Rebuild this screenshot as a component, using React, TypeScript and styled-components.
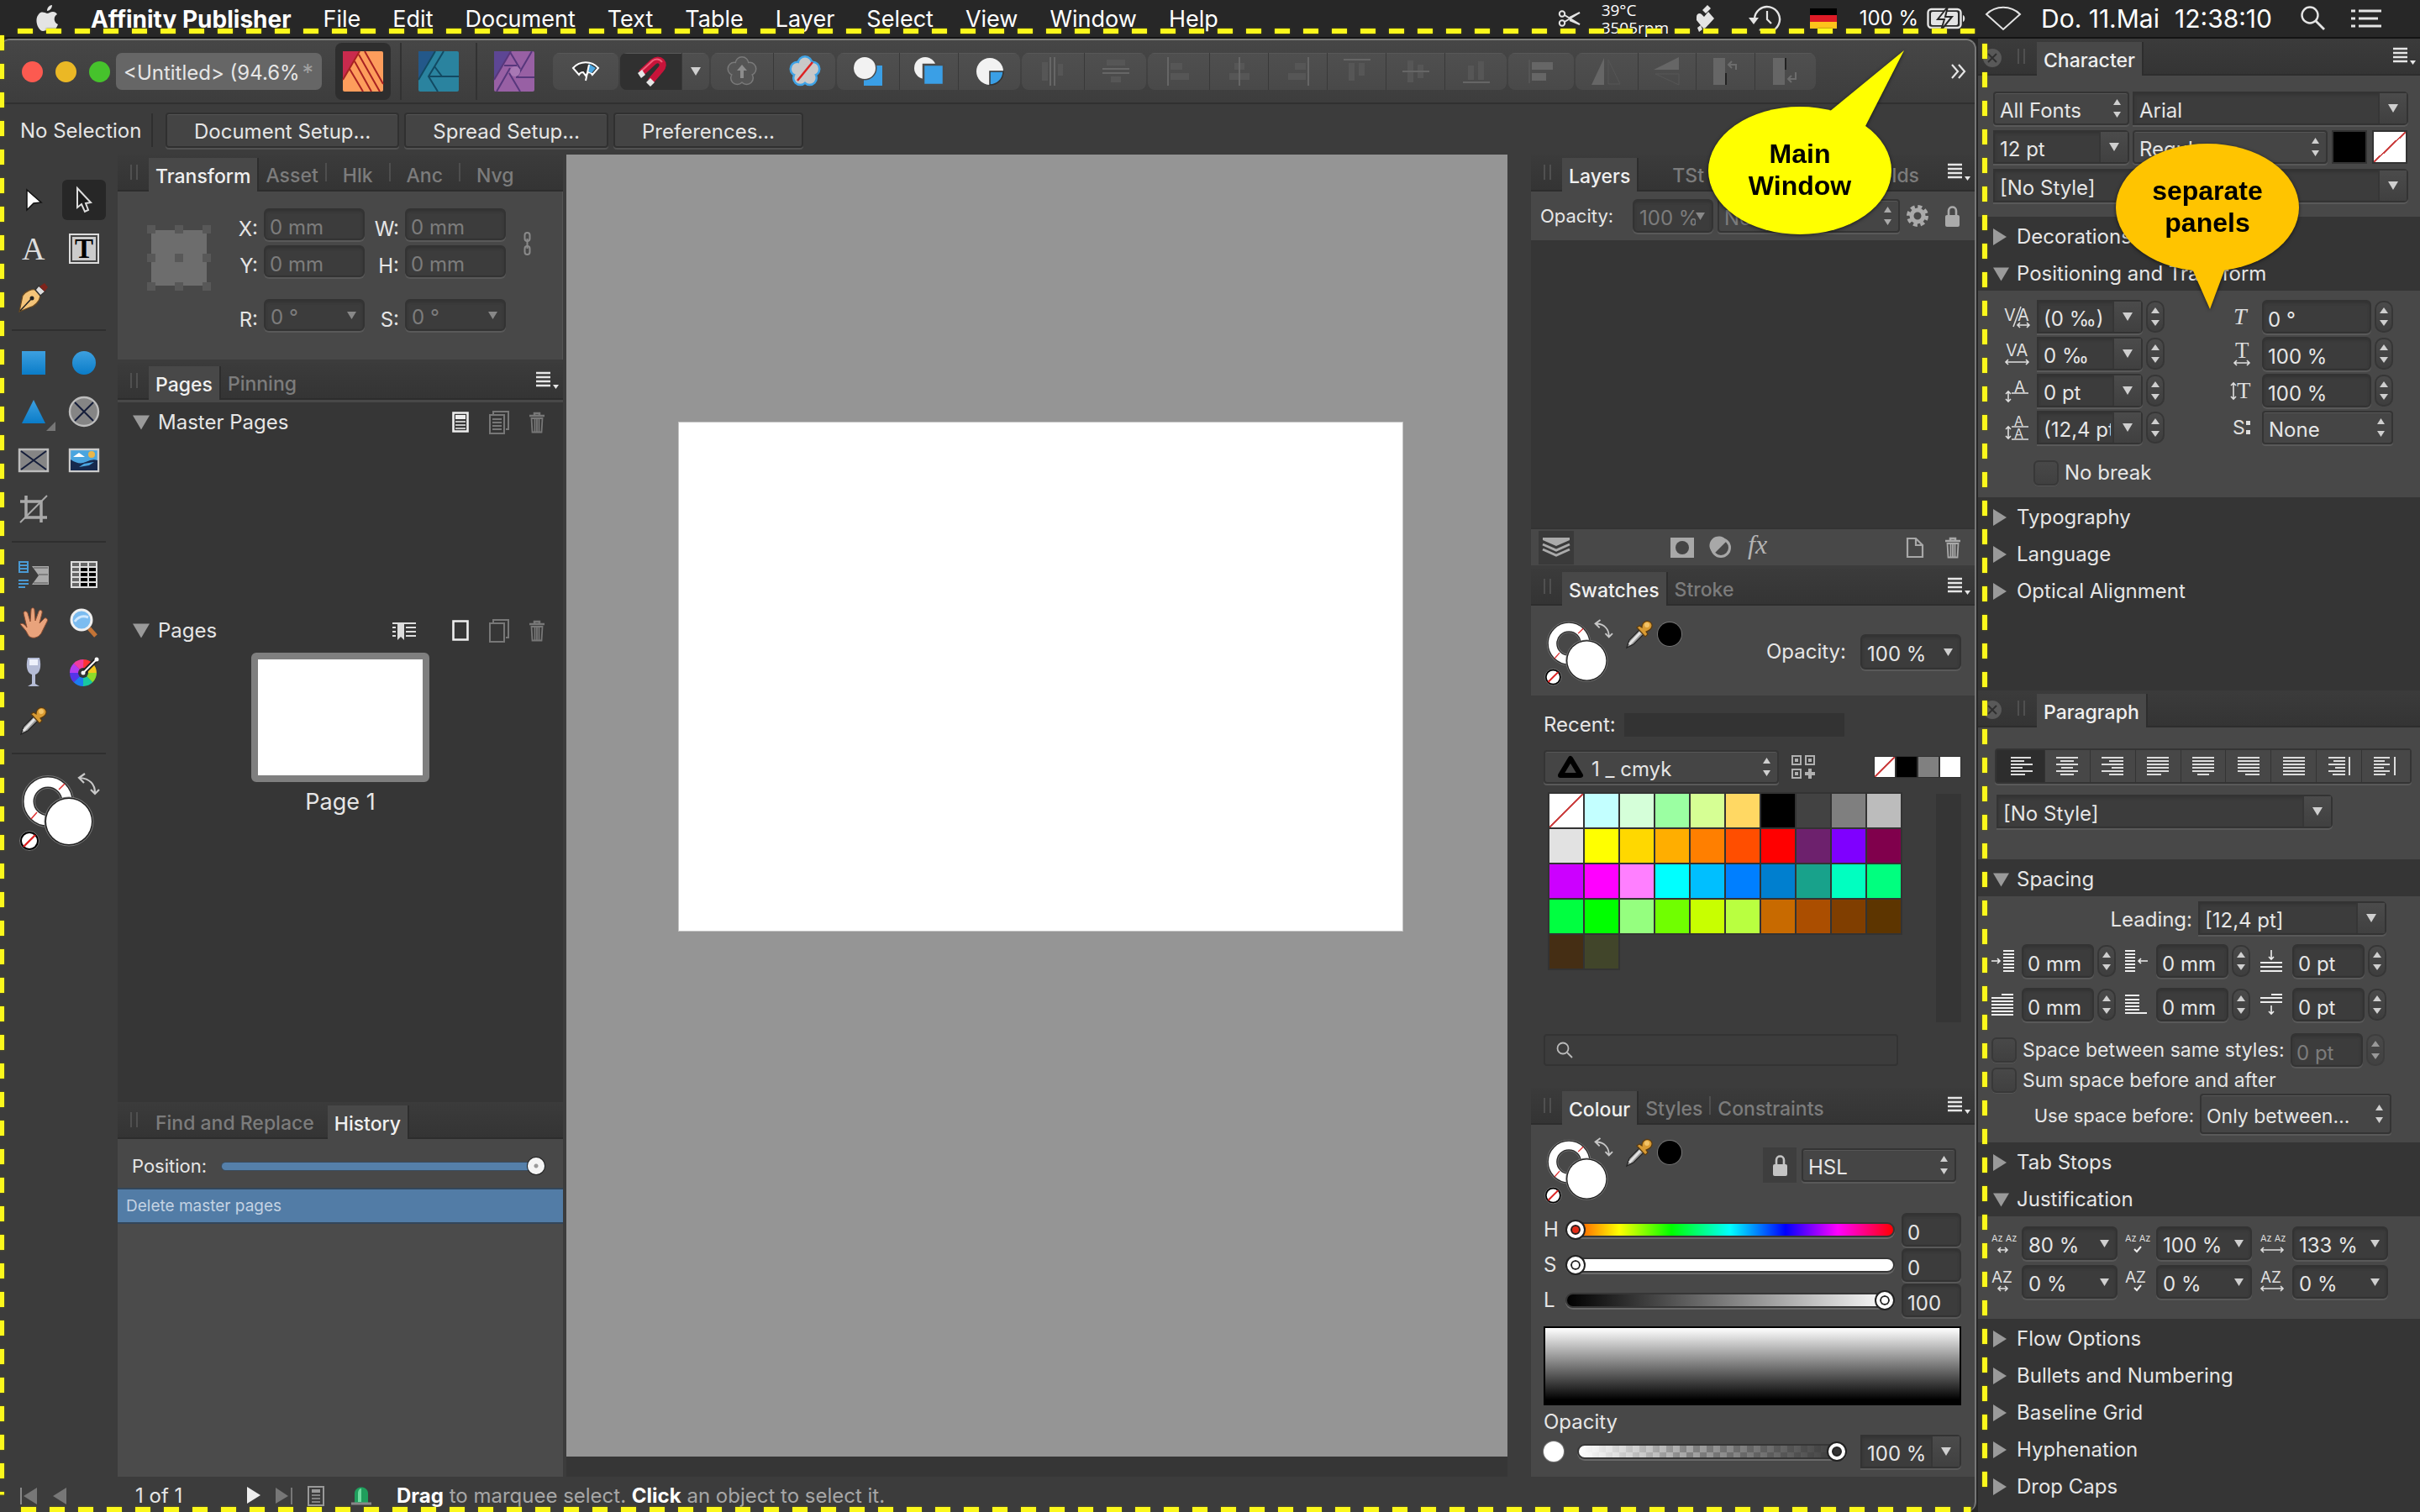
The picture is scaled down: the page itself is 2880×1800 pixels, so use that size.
import React from "react";
import styled, { createGlobalStyle, css } from "styled-components";

const sans = `Inter, "Liberation Sans", sans-serif`;
const c = {
  panel: "#484848",
  chrome: "#3c3c3c",
  dark: "#363636",
  head: "#353535",
  line: "#2d2d2d",
  edge: "#333333",
  glow: "#595959",
  text: "#e6e6e6",
  dim: "#7c7c7c",
  blue: "#527ca6",
};

const Global = createGlobalStyle`
  * { box-sizing: border-box; }
  body { margin: 0; background: #262626; color: ${c.text}; font: 400 24px/30px ${sans}; }
  button, input, select { font: inherit; color: inherit; margin: 0; }
  button { padding: 0; border: 0; background: none; }
  svg { display: block; flex: none; overflow: visible; }
`;

/* ---------- page frame ---------- */

const Screen = styled.div`
  display: flex;
  flex-direction: column;
  min-height: 100vh;
  overflow: hidden;
`;
const Desk = styled.div`
  flex: 1;
  display: flex;
`;
const MainWindow = styled.main`
  position: relative;
  flex: 1;
  min-width: 0;
  display: flex;
  flex-direction: column;
  background: ${c.chrome};
  border-top: 2px solid #7b7c79;
  border-right: 2px solid #777;
  border-radius: 12px 12px 12px 0;
  margin-right: 2px;
`;
const Workspace = styled.div`
  flex: 1;
  display: flex;
`;
const Gap = styled.span<{ $w: number }>`
  flex: 0 0 ${(p) => p.$w}px;
`;
const Push = styled.span`
  margin-left: auto;
`;
const SharedDefs = styled.svg`
  position: absolute;
`;

/* ---------- menu bar ---------- */

const MenuBar = styled.header`
  display: flex;
  align-items: center;
  justify-content: space-between;
  height: 46px;
  padding: 0 46px 0 42px;
  border-bottom: 2px solid #141414;
  background: #272727;
  color: #fff;
  font-size: 27px;
`;
const MenuGroup = styled.nav`
  display: flex;
  align-items: center;
  gap: 38px;
`;
const MenuItem = styled.button<{ $strong?: boolean }>`
  padding-top: 2px;
  font-size: ${(p) => (p.$strong ? 28 : 27)}px;
  font-weight: ${(p) => (p.$strong ? 700 : 400)};
  white-space: nowrap;
`;
const Extras = styled.div`
  display: flex;
  align-items: center;
  gap: 24px;
  white-space: nowrap;
`;
const Sensor = styled.div`
  width: 88px;
  padding-top: 2px;
  font: 400 19px/21px "Open Sans", sans-serif;
`;
const BatteryText = styled.span`
  font-size: 24px;
  margin: 0 -14px 0 3px;
`;
const Flag = styled.div`
  width: 32px;
  height: 24px;
  margin-left: 8px;
  background: linear-gradient(#000 33%, #dd1b26 33% 66%, #fec31b 66%);
`;
const Clock = styled.time`
  display: flex;
  gap: 18px;
  margin-right: 10px;
  font-size: 30px;
`;

/* ---------- toolbar ---------- */

const Toolbar = styled.div`
  display: flex;
  align-items: center;
  height: 76px;
  padding: 0 10px 0 26px;
  border-bottom: 2px solid #303030;
  background: linear-gradient(#464646, #3d3d3d);
  border-radius: 12px 12px 0 0;
`;
const Lights = styled.div`
  display: flex;
  gap: 15px;
  margin-right: 7px;
`;
const Light = styled.button<{ $color: string }>`
  width: 25px;
  height: 25px;
  border-radius: 50%;
  background: ${(p) => p.$color};
`;
const DocTab = styled.button`
  display: flex;
  align-items: center;
  justify-content: space-between;
  width: 245px;
  height: 44px;
  padding: 3px 10px 0 9px;
  margin-right: 16px;
  border-radius: 7px;
  background: #666;
  white-space: nowrap;
`;
const Star = styled.span`
  color: #a0a0a0;
  font-size: 27px;
`;
const Persona = styled.button<{ $on?: boolean }>`
  display: grid;
  place-items: center;
  width: 66px;
  height: 68px;
  border-radius: 8px;
  background: ${(p) => (p.$on ? "#2e2e2e" : "none")};
`;
const PersonaRule = styled.div`
  width: 2px;
  height: 68px;
  margin: 0 11px;
  background: #323232;
`;
const Segments = styled.div`
  display: flex;
  gap: 1px;
  margin-right: 2px;
  border-radius: 8px;
  overflow: hidden;
  background: #393939;
`;
const Segment = styled.button<{ $w?: number; $on?: boolean }>`
  display: grid;
  place-items: center;
  width: ${(p) => p.$w ?? 74}px;
  height: 44px;
  background: ${(p) => (p.$on ? "#303030" : "linear-gradient(#4f4f4f, #494949)")};
  box-shadow: inset 0 1px #585858;
`;

/* ---------- context bar ---------- */

const ContextBar = styled.div`
  display: flex;
  align-items: center;
  height: 60px;
  padding: 2px 24px 0;
  gap: 6px;
`;
const ContextLabel = styled.span`
  width: 158px;
  margin-right: 9px;
  padding-top: 2px;
  border-right: 2px solid #2f2f2f;
  line-height: 38px;
`;
const ContextButton = styled.button`
  height: 42px;
  padding: 4px 32px 0;
  border: 2px solid #303030;
  border-radius: 4px;
  background: #444;
  box-shadow: inset 0 1px #545454, 0 2px #525252;
`;

/* ---------- tool strip ---------- */

const Tools = styled.aside`
  width: 140px;
  padding: 25px 14px 0 10px;
`;
const ToolGrid = styled.div`
  display: grid;
  grid-template-columns: 60px 60px;
  grid-auto-rows: 58px;
  place-items: center;
`;
const Tool = styled.button<{ $on?: boolean }>`
  display: grid;
  place-items: center;
  width: 52px;
  height: 48px;
  border-radius: 6px;
  background: ${(p) => (p.$on ? "#272727" : "none")};
`;
const ToolRule = styled.hr`
  height: 2px;
  margin: 9px 0 9px 4px;
  border: 0;
  background: #2f2f2f;
`;
const ToolFill = styled.div`
  padding: 14px 0 0 12px;
`;

/* ---------- studio panels ---------- */

const Studio = styled.aside<{ $w: number }>`
  display: flex;
  flex-direction: column;
  width: ${(p) => p.$w}px;
`;
const TabRow = styled.div<{ $gap?: boolean }>`
  display: flex;
  align-items: stretch;
  height: 44px;
  margin-top: ${(p) => (p.$gap ? 4 : 0)}px;
  padding-top: 4px;
  border-bottom: 2px solid ${c.line};
  background: linear-gradient(#3b3b3b, #343434);
  flex: none;
`;
const Grip = styled.span<{ $w?: number }>`
  width: ${(p) => p.$w ?? 37}px;
  display: flex;
  gap: 5px;
  padding: 8px 0 0 15px;
  &::before, &::after {
    content: "";
    width: 2px;
    height: 18px;
    background: #505050;
  }
`;
const Tab = styled.button<{ $on?: boolean; $wide?: boolean }>`
  padding: 4px ${(p) => (p.$wide ? 19 : 8)}px 0;
  color: ${(p) => (p.$on ? "#f0f0f0" : c.dim)};
  font-size: 23px;
  font-weight: 500;
  white-space: nowrap;
  ${(p) => p.$on && css`
    margin-bottom: -2px;
    background: ${c.panel};
    border-right: 2px solid ${c.line};
  `}
`;
const TabRule = styled.span`
  width: 2px;
  height: 22px;
  margin-top: 6px;
  background: #4e4e4e;
`;
const PanelMenu = styled.button<{ $far?: boolean }>`
  margin: 0 4px 4px ${(p) => (p.$far ? "15px" : "auto")};
`;
const Body = styled.div<{ $pad?: string; $tone?: string; $grow?: boolean }>`
  padding: ${(p) => p.$pad ?? "0"};
  background: ${(p) => p.$tone ?? c.panel};
  flex: ${(p) => (p.$grow ? "1" : "none")};
`;
const Row = styled.div<{ $gap?: number; $top?: number; $h?: number; $left?: number; $right?: number }>`
  display: flex;
  align-items: center;
  gap: ${(p) => p.$gap ?? 0}px;
  margin: ${(p) => p.$top ?? 0}px ${(p) => p.$right ?? 0}px 0 ${(p) => p.$left ?? 0}px;
  ${(p) => p.$h && css`height: ${p.$h}px;`}
`;

/* ---------- controls ---------- */

const sunken = css`
  border: 2px solid ${c.edge};
  border-radius: 6px;
  background: #3c3c3c;
  box-shadow: inset 0 2px 3px #333, 0 2px ${c.glow};
`;
const raised = css`
  border: 2px solid #343434;
  border-radius: 4px;
  background: #454545;
  box-shadow: inset 0 1px #565656, 0 2px ${c.glow};
`;
const TextField = styled.input<{ $h?: number; $w?: number; $dim?: boolean }>`
  ${sunken}
  width: ${(p) => (p.$w ? p.$w + "px" : "100%")};
  min-width: 0;
  height: ${(p) => p.$h ?? 40}px;
  padding: 6px 4px 0 5px;
  color: ${(p) => (p.$dim ? c.dim : c.text)};
  outline: 0;
`;
const Frame = styled.div<{ $w?: number; $h?: number; $flat?: boolean; $dim?: boolean }>`
  ${(p) => (p.$flat ? raised : sunken)}
  display: flex;
  align-items: center;
  width: ${(p) => (p.$w ? p.$w + "px" : "100%")};
  height: ${(p) => p.$h ?? 40}px;
  padding-right: 8px;
  flex: none;
  color: ${(p) => (p.$dim ? c.dim : c.text)};
`;
const Choice = styled.select<{ $small?: boolean }>`
  flex: 1;
  min-width: 0;
  height: 100%;
  padding: 5px 0 0 6px;
  border: 0;
  outline: 0;
  background: none;
  appearance: none;
  font-size: ${(p) => (p.$small ? 23 : 24)}px;
`;
const ComboFrame = styled.div<{ $w?: number }>`
  ${sunken}
  display: flex;
  width: ${(p) => (p.$w ? p.$w + "px" : "100%")};
  height: 40px;
  border-radius: 0 5px 5px 0;
  flex: ${(p) => (p.$w ? "none" : "1")};
  min-width: 0;
`;
const ComboText = styled.input`
  flex: 1;
  min-width: 0;
  padding: 5px 2px 0 6px;
  border: 0;
  outline: 0;
  background: none;
`;
const ComboArrow = styled.button`
  display: grid;
  place-items: center;
  width: 34px;
  border-left: 2px solid #363636;
  background: linear-gradient(#4b4b4b, #404040);
`;
const StepFrame = styled.div<{ $dim?: boolean }>`
  display: flex;
  flex-direction: column;
  align-items: center;
  justify-content: center;
  flex: none;
  gap: 8px;
  width: 22px;
  height: 38px;
  border: 2px solid #363636;
  border-radius: 10px;
  background: linear-gradient(#4a4a4a, #3e3e3e);
  opacity: ${(p) => (p.$dim ? 0.6 : 1)};
`;
const Check = styled.input`
  appearance: none;
  width: 30px;
  height: 30px;
  flex: none;
  border: 2px solid #383838;
  border-radius: 6px;
  background: linear-gradient(#484848, #404040);
  box-shadow: 0 1px #555;
`;
const CheckLabel = styled.label<{ $small?: boolean }>`
  display: flex;
  align-items: center;
  gap: 7px;
  font-size: ${(p) => (p.$small ? 23 : 24)}px;
  white-space: nowrap;
`;
const Label = styled.label<{ $right?: boolean; $small?: boolean; $w?: number }>`
  font-size: ${(p) => (p.$small ? 22 : 24)}px;
  ${(p) => p.$w && css`width: ${p.$w}px;`}
  ${(p) => p.$right && css`
    text-align: right;
    padding-right: 7px;
    line-height: 26px;
  `}
  white-space: nowrap;
`;
const Slider = styled.input<{ $track: string; $knob: string }>`
  appearance: none;
  flex: 1;
  min-width: 0;
  height: 18px;
  margin: 0;
  border: 2px solid #363636;
  border-radius: 9px;
  background: ${(p) => p.$track};
  box-shadow: 0 2px #6a6a6a;
  &::-webkit-slider-thumb {
    appearance: none;
    width: 20px;
    height: 20px;
    border: 4px solid #fff;
    border-radius: 50%;
    background: ${(p) => p.$knob};
    box-shadow: 0 0 0 2px #222, inset 0 0 0 2px #222;
  }
`;
const HistorySlider = styled.input`
  appearance: none;
  flex: 1;
  min-width: 0;
  height: 9px;
  border-radius: 5px;
  background: #5580aa;
  box-shadow: 0 0 0 1px #3a4b5c;
  &::-webkit-slider-thumb {
    appearance: none;
    width: 20px;
    height: 20px;
    border-radius: 50%;
    background: radial-gradient(circle, #999 2px, #f4f4f4 3px);
    box-shadow: 0 0 0 1px #222;
  }
`;

/* ---------- transform, pages, history ---------- */

const TransformBody = styled.div`
  display: flex;
  height: 200px;
  padding: 20px 35px;
  background: ${c.panel};
  border-right: 1px solid #555;
`;
const TransformGrid = styled.div`
  display: grid;
  grid-template-columns: 63px 120px 48px 120px;
  grid-template-rows: 38px 38px 58px;
  gap: 6px 0;
  align-items: end;
  margin-right: 21px;
`;
const AnchorBox = styled.div`
  padding-top: 20px;
`;
const LinkBox = styled.div`
  padding-top: 28px;
`;
const Section = styled.section<{ $h?: number }>`
  background: ${c.dark};
  ${(p) => (p.$h ? css`height: ${p.$h}px;` : css`flex: 1;`)}
`;
const SectionHead = styled.div`
  display: flex;
  align-items: center;
  height: 44px;
  padding: 3px 22px 0 18px;
`;
const SectionTitle = styled.h3`
  margin: 0 auto 0 10px;
  font-size: 24px;
  font-weight: 400;
`;
const SectionTools = styled.div`
  display: flex;
  align-items: center;
  gap: 24px;
`;
const PageTile = styled.figure`
  display: flex;
  flex-direction: column;
  align-items: center;
  gap: 9px;
  margin: 6px 0 0;
  font-size: 27px;
`;
const PageThumb = styled.div`
  width: 212px;
  height: 154px;
  border: 8px solid #7f7f7f;
  border-radius: 6px;
  background: #fff;
`;
const StudioEdge = styled.div`
  height: 3px;
  background: ${c.panel};
`;
const HistoryItem = styled.button`
  display: block;
  width: 100%;
  height: 43px;
  padding-left: 10px;
  border: solid #33465a;
  border-width: 2px 0;
  background: ${c.blue};
  color: #c3d2e2;
  font-size: 19px;
  text-align: left;
`;

/* ---------- canvas ---------- */

const CanvasColumn = styled.div`
  display: flex;
  flex-direction: column;
  flex: 1;
  min-width: 0;
  margin: 0 28px 0 4px;
`;
const Canvas = styled.div`
  flex: 1;
  padding: 318px 124px 0 133px;
  background: #959595;
`;
const Sheet = styled.div`
  aspect-ratio: 862 / 606;
  border: 1px solid #c4c4c4;
  background: #fff;
`;
const CanvasFoot = styled.div`
  height: 24px;
  background: ${c.dark};
`;

/* ---------- right studio ---------- */

const LayerFoot = styled.div`
  display: flex;
  align-items: center;
  height: 45px;
  padding: 0 17px 0 9px;
  gap: 20px;
  border-top: 2px solid #333;
  background: ${c.panel};
`;
const LayerStack = styled.button`
  display: grid;
  place-items: center;
  width: 42px;
  height: 40px;
  margin-right: 95px;
  background: #3a3a3a;
`;
const Recent = styled.div`
  width: 262px;
  height: 28px;
  margin-left: 10px;
  background: #333;
`;
const MiniSwatches = styled.div`
  display: flex;
  gap: 2px;
  padding: 1px;
  background: #303030;
`;
const Mini = styled.button<{ $c: string }>`
  width: 24px;
  height: 24px;
  background: ${(p) => p.$c};
`;
const SwatchArea = styled.div`
  display: flex;
  justify-content: space-between;
  padding: 12px 0 0 7px;
  height: 284px;
`;
const SwatchGrid = styled.div`
  display: grid;
  grid-template-columns: repeat(10, 40px);
  grid-auto-rows: 40px;
  gap: 2px;
  align-content: start;
`;
const Swatch = styled.button<{ $c: string }>`
  background: ${(p) => p.$c};
  box-shadow: 0 0 0 2px #333;
`;
const SwatchScroll = styled.div`
  width: 30px;
  background: #353535;
`;
const SearchBox = styled.div`
  display: flex;
  align-items: center;
  width: 422px;
  height: 38px;
  margin: 14px 0 26px;
  padding-left: 13px;
  border: 2px solid #333;
  border-radius: 4px;
`;
const SearchInput = styled.input`
  flex: 1;
  min-width: 0;
  border: 0;
  outline: 0;
  background: none;
`;
const LockButton = styled.button`
  display: grid;
  place-items: center;
  width: 40px;
  height: 42px;
  background: #3e3e3e;
`;
const ChannelGrid = styled.div`
  display: grid;
  grid-template-columns: 26px 1fr 71px;
  align-items: center;
  grid-auto-rows: 42px;
  margin-top: 8px;
`;
const ChannelSlider = styled.div`
  display: flex;
  margin-right: 8px;
`;
const Ramp = styled.div`
  height: 94px;
  margin-top: 10px;
  border: 2px solid #000;
  background: linear-gradient(#fff, #000 95%);
`;
const Dot = styled.span<{ $d: number; $c: string }>`
  width: ${(p) => p.$d}px;
  height: ${(p) => p.$d}px;
  border-radius: 50%;
  background: ${(p) => p.$c};
  box-shadow: 0 0 0 1px #777;
`;
const FillRow = styled.div`
  display: flex;
  align-items: flex-start;
  gap: 12px;
`;

/* ---------- status bar ---------- */

const StatusBar = styled.footer`
  display: flex;
  align-items: center;
  height: 42px;
  padding: 4px 24px 0;
  color: #a6a6a6;
  white-space: nowrap;
`;
const PageCount = styled.span`
  width: 210px;
  padding-left: 77px;
  color: ${c.text};
`;
const Hint = styled.p`
  margin: 0 0 0 30px;
  b { color: #fff; }
`;

/* ---------- floating panels ---------- */

const SidePanels = styled.aside`
  display: flex;
  flex-direction: column;
  width: 526px;
  background: ${c.head};
`;
const CloseButton = styled.button`
  align-self: center;
  margin: 0 4px 0 6px;
`;
const Fold = styled.button`
  display: flex;
  align-items: center;
  gap: 12px;
  height: 44px;
  padding: 4px 0 0 18px;
  flex: none;
`;
const FoldMark = styled.span`
  display: grid;
  place-items: center;
  width: 16px;
`;
const ColorBlock = styled.button<{ $c: string }>`
  width: 42px;
  height: 40px;
  border: 2px solid #333;
  background: ${(p) => p.$c};
`;
const PositionGrid = styled.div`
  display: grid;
  grid-template-columns: 34px 126px 22px 108px 130px 22px;
  grid-auto-rows: 40px;
  gap: 4px;
  align-items: center;
`;
const IconCell = styled.span<{ $end?: boolean; $mid?: boolean }>`
  display: flex;
  justify-content: ${(p) => (p.$end ? "flex-end" : p.$mid ? "center" : "flex-start")};
  padding-right: ${(p) => (p.$end ? 10 : 0)}px;
`;
const Span2 = styled.div`
  grid-column: span 2;
`;
const AlignBar = styled.div`
  display: flex;
  gap: 1px;
  height: 42px;
  border: 2px solid #343434;
  border-radius: 4px;
  background: #343434;
  box-shadow: 0 2px ${c.glow};
`;
const AlignButton = styled.button<{ $on?: boolean }>`
  display: grid;
  place-items: center;
  flex: 0 1 53px;
  background: ${(p) => (p.$on ? "#2d2d2d" : "#474747")};
  &:first-child {
    flex-basis: 57px;
    padding-left: 4px;
  }
  &:last-child {
    flex: 1 1 57px;
    padding-right: 4px;
  }
`;
const SpacingGrid = styled.div`
  display: grid;
  grid-template-columns: 32px 86px 22px 40px 86px 22px 42px 86px 22px;
  grid-auto-rows: 42px;
  gap: 10px 4px;
  align-items: center;
  margin-top: 10px;
`;
const JustifyGrid = styled.div`
  display: grid;
  grid-template-columns: 32px 114px 38px 114px 40px 114px;
  gap: 6px 4px;
  align-items: center;
`;
const RightLabel = styled.label<{ $small?: boolean }>`
  width: 239px;
  margin-right: 7px;
  padding-top: 4px;
  font-size: ${(p) => (p.$small ? 22 : 24)}px;
  text-align: right;
  white-space: nowrap;
`;

/* ---------- annotations over the window ---------- */

const Outline = styled.svg`
  position: absolute;
  z-index: 5;
  left: 2px;
  top: -11px;
  width: calc(100% + 10px);
  height: calc(100% + 8px);
  pointer-events: none;
  filter: drop-shadow(0 0 1px rgba(120, 120, 0, 0.9));
`;
const Bubble = styled.div<{ $x: string; $y: number; $top: number }>`
  position: absolute;
  z-index: 6;
  left: ${(p) => p.$x};
  top: ${(p) => p.$y}px;
  width: 240px;
  height: 224px;
  padding: ${(p) => p.$top}px 22px 0 0;
  color: #000;
  font: 700 32px/38px "Liberation Sans", Arial, sans-serif;
  text-align: center;
  filter: drop-shadow(0 1px 2px rgba(0, 0, 0, 0.6));
`;
const BubbleShape = styled.svg`
  position: absolute;
  z-index: -1;
  left: 0;
  top: 0;
`;
const SideWrap = styled.div`
  position: relative;
  display: flex;
`;

/* ---------- icons ---------- */

const Ico: React.FC<{ w: number; h: number; children: React.ReactNode }> = ({ w, h, children }) => (
  <svg width={w} height={h} viewBox={`0 0 ${w} ${h}`} fill="none" aria-hidden="true">{children}</svg>
);
const Down: React.FC<{ s?: number; color?: string }> = ({ s = 12, color = "#cfcfcf" }) => (
  <Ico w={s} h={s}><path d={`M0 ${s * 0.08}H${s}L${s / 2} ${s * 0.92}Z`} fill={color} /></Ico>
);
const UpDown = ({ color = "#cfcfcf" }: { color?: string }) => (
  <Ico w={9} h={22}><path d="M0 7L4.500 0L9 7ZM0 15H9L4.500 22Z" fill={color} /></Ico>
);
const MenuLines = () => (
  <Ico w={28} h={22}>
    <path d="M0 2H17M0 7H17M0 12H17M0 17H17" stroke="#e6e6e6" strokeWidth="2.400" />
    <path d="M20 16H27L23.500 21Z" fill="#e6e6e6" />
  </Ico>
);
const FillStroke = ({ w = 98, h = 94 }: { w?: number; h?: number }) => (
  <svg width={w} height={h} viewBox="0 0 98 94" fill="none" aria-hidden="true">
    <circle cx="35" cy="33" r="23" stroke="#757575" strokeWidth="16" />
    <circle cx="35" cy="33" r="23" stroke="#2b2b2b" strokeWidth="14" />
    <circle cx="35" cy="33" r="23" stroke="#fff" strokeWidth="11" />
    <path d="M48 19L55 12M15 54L22 46" stroke="#e03030" strokeWidth="1.500" />
    <circle cx="60" cy="57" r="29.500" fill="#777" />
    <circle cx="60" cy="57" r="28.500" fill="#222" />
    <circle cx="60" cy="57" r="27" fill="#fff" />
    <circle cx="13" cy="80" r="11.500" fill="#000" stroke="#777" />
    <circle cx="13" cy="80" r="9" fill="#fff" />
    <path d="M6 87L20 73" stroke="#d22" strokeWidth="2.400" />
    <path d="M73 5C85 6 91 13 91 23M79 0L72 5L78 11M86 19L91 24L96 19" stroke="#c8c8c8" strokeWidth="2.200" />
  </svg>
);
const Dropper = () => (
  <Ico w={32} h={34}>
    <path d="M1 33L4 24L17 11L22 16L9 29Z" fill="#9c9c9c" stroke="#222" strokeWidth="1.200" />
    <path d="M4 29L17 15" stroke="#e2e2e2" strokeWidth="3" />
    <path d="M13 9L16 7L19 9C19 3 24 0 28 2C33 5 32 11 24 14L26 17L23 20Z" fill="#d99b33" stroke="#5a3b10" strokeWidth="1.200" />
    <circle cx="25" cy="6" r="3" fill="#f3c367" />
  </Ico>
);
const Trash = ({ color = "#777" }: { color?: string }) => (
  <Ico w={18} h={26}>
    <path d="M0 5H18M6 5V2H12V5" stroke={color} strokeWidth="2.500" />
    <path d="M2.500 8L3.500 24.500H14.500L15.500 8ZM6.500 9V24M9 9V24M11.500 9V24" stroke={color} strokeWidth="1.800" />
  </Ico>
);
const DocIcon = ({ lines, color = "#eee" }: { lines?: boolean; color?: string }) => (
  <Ico w={20} h={25}>
    <path d="M1.500 1.500H18.500V23.500H1.500Z" stroke={color} strokeWidth="2.600" />
    {lines && <path d="M4 6.500H16" stroke={color} strokeWidth="5" />}
    {lines && <path d="M4 12H16M4 16H16M4 20H16" stroke={color} strokeWidth="1.600" />}
  </Ico>
);
const DocCopy = ({ lines }: { lines?: boolean }) => (
  <Ico w={24} h={28}>
    <path d="M1 5H18V27H1ZM5 4V1H23V22H20" stroke="#777" strokeWidth="2" />
    {lines && <path d="M4 10H15M4 14H15M4 18H15M4 22H15" stroke="#777" strokeWidth="2" />}
  </Ico>
);
const Lock = ({ color = "#aaa" }: { color?: string }) => (
  <Ico w={17} h={25}>
    <path d="M4 12V6C4 0 13 0 13 6V12" stroke={color} strokeWidth="2.600" />
    <rect y="11" width="17" height="14" rx="2" fill={color} />
  </Ico>
);
const Cross = ({ round }: { round?: boolean }) => (
  <Ico w={36} h={round ? 36 : 28}>
    {round ? <circle cx="18" cy="18" r="17" fill="#858585" stroke="#bdbdbd" strokeWidth="2.400" />
      : <rect x="1" y="1" width="34" height="26" fill="#858585" stroke="#bdbdbd" strokeWidth="2.400" />}
    <path d={round ? "M7 7L29 29M29 7L7 29" : "M3 3L33 25M33 3L3 25"} stroke="#141d3a" strokeWidth="2" />
  </Ico>
);
const Lines: React.FC<{ rows: [number, number][]; bar?: boolean }> = ({ rows, bar }) => (
  <Ico w={26} h={22}>
    {rows.map(([a, b], i) => <path key={i} d={`M${a} ${1 + i * 4}H${b}`} stroke="#dcdcdc" strokeWidth="2" />)}
    {bar && <path d="M25 0V22" stroke="#dcdcdc" strokeWidth="2" />}
  </Ico>
);
const CloseX = () => (
  <Ico w={22} h={22}><circle cx="11" cy="11" r="11" fill="#595959" /><path d="M6 6L16 16M16 6L6 16" stroke="#303030" strokeWidth="2" /></Ico>
);
const GlyphText = styled.text<{ $serif?: boolean }>`
  fill: #dedede;
  font-family: ${(p) => (p.$serif ? `"Liberation Serif", serif` : sans)};
`;
const HArrow = ({ a, b, y }: { a: number; b: number; y: number }) => (
  <path d={`M${a} ${y}H${b}M${a + 3} ${y - 3}L${a} ${y}L${a + 3} ${y + 3}M${b - 3} ${y - 3}L${b} ${y}L${b - 3} ${y + 3}`} stroke="#dedede" strokeWidth="1.600" />
);
const VArrow = ({ x, a, b }: { x: number; a: number; b: number }) => (
  <path d={`M${x} ${a}V${b}M${x - 3} ${a + 3}L${x} ${a}L${x + 3} ${a + 3}M${x - 3} ${b - 3}L${x} ${b}L${x + 3} ${b - 3}`} stroke="#dedede" strokeWidth="1.600" />
);

/* ---------- composite controls ---------- */

const Pick: React.FC<{ id?: string; label: string; value: string; w?: number; h?: number; flat?: boolean; dim?: boolean; small?: boolean }> = ({ id, label, value, w, h, flat, dim, small }) => (
  <Frame $w={w} $h={h} $flat={flat} $dim={dim}>
    <Choice id={id} aria-label={label} $small={small}><option>{value}</option></Choice>
    {flat ? <UpDown color={dim ? "#aaa" : undefined} /> : <Down s={11} color={dim ? "#888" : undefined} />}
  </Frame>
);
const Combo: React.FC<{ id?: string; label: string; value: string; w?: number }> = ({ id, label, value, w }) => (
  <ComboFrame $w={w}>
    <ComboText id={id} aria-label={label} defaultValue={value} />
    <ComboArrow aria-label={`${label} options`}><Down /></ComboArrow>
  </ComboFrame>
);
const Steps = ({ label, dim }: { label: string; dim?: boolean }) => (
  <StepFrame $dim={dim}>
    <button aria-label={`Increase ${label}`}><Ico w={10} h={7}><path d="M0 7L5 0L10 7Z" fill="#cfcfcf" /></Ico></button>
    <button aria-label={`Decrease ${label}`}><Ico w={10} h={7}><path d="M0 0H10L5 7Z" fill="#cfcfcf" /></Ico></button>
  </StepFrame>
);
const FoldHead = ({ title, open }: { title: string; open?: boolean }) => (
  <Fold aria-expanded={!!open}>
    <FoldMark>
      {open ? <Down s={19} color="#9a9a9a" /> : <Ico w={16} h={20}><path d="M0 0L16 10L0 20Z" fill="#9a9a9a" /></Ico>}
    </FoldMark>
    {title}
  </Fold>
);

/* ---------- toolbar drawings ---------- */

const grey = "#666";
const faint = "#565656";
const alignIcons: React.ReactNode[] = [
  <Ico w={32} h={34}><path d="M3 0V34" stroke={grey} strokeWidth="2" /><path d="M6 7H20V15H6ZM6 19H28V27H6Z" fill={faint} /></Ico>,
  <Ico w={32} h={34}><path d="M10 7H22V15H10ZM4 19H28V27H4Z" fill={faint} /><path d="M16 0V34" stroke={grey} strokeWidth="2" /></Ico>,
  <Ico w={32} h={34}><path d="M28 0V34" stroke={grey} strokeWidth="2" /><path d="M12 7H25V15H12ZM4 19H25V27H4Z" fill={faint} /></Ico>,
  <Ico w={32} h={34}><path d="M0 3H32" stroke={grey} strokeWidth="2" /><path d="M6 7H13V28H6ZM18 7H25V22H18Z" fill={faint} /></Ico>,
  <Ico w={32} h={34}><path d="M6 4H13V30H6ZM18 9H25V25H18Z" fill={faint} /><path d="M0 17H32" stroke={grey} strokeWidth="2" /></Ico>,
  <Ico w={32} h={34}><path d="M0 30H32" stroke={grey} strokeWidth="2" /><path d="M6 10H13V27H6ZM18 5H25V27H18Z" fill={faint} /></Ico>,
];
const petals = Array.from({ length: 5 }, (_, i) => {
  const a = ((i * 72 - 90) * Math.PI) / 180;
  return { cx: 18 + 9.5 * Math.cos(a), cy: 19 + 9.5 * Math.sin(a) };
});
const Flower = ({ on }: { on?: boolean }) => (
  <Ico w={36} h={38}>
    {petals.map((p, i) => <circle key={i} cx={p.cx} cy={p.cy} r="7" stroke={on ? "#3fa3e6" : "#7a7a7a"} strokeWidth={on ? 5 : 3} />)}
    {petals.map((p, i) => <circle key={i} cx={p.cx} cy={p.cy} r="7" fill={on ? "#c9c9c9" : "#555"} />)}
    <circle cx="18" cy="19" r="9" fill={on ? "#c9c9c9" : "#555"} />
    {on ? <path d="M9 30L27 8" stroke="#d22" strokeWidth="2.500" /> : <path d="M18 11L24 18H20V27H16V18H12Z" fill="#8c8c8c" />}
  </Ico>
);

const slash = "linear-gradient(to bottom right, #fff calc(50% - 1px), #c44 calc(50% - 1px) calc(50% + 1px), #fff calc(50% + 1px))";
const swatchColors = [
  slash, "#c3ffff", "#d5ffd9", "#9bffa2", "#d6ff94", "#ffd863", "#000", "#424242", "#7f7f7f", "#bcbcbc",
  "#e2e2e2", "#ffff00", "#ffd800", "#ffae00", "#ff7f00", "#ff4e00", "#ff0000", "#6d216d", "#7f00ff", "#80004c",
  "#cc00ff", "#ff00ff", "#ff7fff", "#00ffff", "#00bfff", "#007fff", "#007fcf", "#18a28b", "#00ffc0", "#00ff7f",
  "#00ff40", "#00ff00", "#95ff7f", "#70ff00", "#c8ff00", "#b9ff40", "#c86a00", "#ab4e00", "#803e00", "#5d3500",
  "#452e14", "#41452a",
];

const Toolbars = () => (
  <>
    <Toolbar>
      <Lights>
        <Light $color="#fc5a50" aria-label="Close" />
        <Light $color="#ebb825" aria-label="Minimise" />
        <Light $color="#46c22c" aria-label="Zoom" />
      </Lights>
      <DocTab><span>&lt;Untitled&gt; (94.6%</span><Star>*</Star></DocTab>
      <Persona $on aria-label="Publisher">
        <Ico w={48} h={48}>
          <rect width="48" height="48" rx="2" fill="#fd9d5c" />
          <path d="M0 0H20L0 34Z" fill="#c92a4d" />
          <path d="M20 0L0 34M26 0L48 39M19 4L44 48M14 12L34 48M8 21L24 48" stroke="#a82222" strokeWidth="2" />
        </Ico>
      </Persona>
      <PersonaRule />
      <Persona aria-label="Designer">
        <Ico w={48} h={48}>
          <rect width="48" height="48" rx="2" fill="#2a839f" />
          <path d="M0 0H20L0 33Z" fill="#23588a" />
          <path d="M20 0L0 34M30 0L12 30L23 48M12 30H48M19 18L28 30" stroke="#124a63" strokeWidth="2" />
        </Ico>
      </Persona>
      <PersonaRule />
      <Persona aria-label="Photo">
        <Ico w={48} h={48}>
          <rect width="48" height="48" rx="2" fill="#9860a4" />
          <path d="M0 0H20L0 34Z" fill="#5d4694" />
          <path d="M20 0L0 34M19 1L31 21M45 0L27 31M12 17H27M19 20L3 48M18 26L31 48M26 31H48" stroke="#57377c" strokeWidth="2" />
          <circle cx="25" cy="24" r="6" fill="#a878b4" />
        </Ico>
      </Persona>
      <Gap $w={13} />
      <Segments>
        <Segment $w={78} aria-label="Preflight">
          <Ico w={34} h={26}>
            <path d="M2 9C10 0 24 0 32 9L25 17C24 15 22 14 20 14L17 18L14 14C12 14 10 15 9 17Z" fill="#333" stroke="#fff" strokeWidth="2" />
            <path d="M21 4L29 9L24 15L20 13Z" fill="#4ba6e0" />
            <path d="M21 5L17 24" stroke="#fff" strokeWidth="2" />
          </Ico>
        </Segment>
      </Segments>
      <Segments>
        <Segment $w={73} $on aria-label="Snapping">
          <Ico w={36} h={36}>
            <path d="M6 20L20 7C28 0 36 9 29 16L17 30" stroke="#c8143a" strokeWidth="8" />
            <path d="M7 17L20 5C25 2 29 4 31 7" stroke="#f0607a" strokeWidth="2" />
            <path d="M2 20L7 16L11 22L6 26ZM12 31L17 26L22 31L17 36Z" fill="#e6e6e6" />
          </Ico>
        </Segment>
        <Segment $w={32} aria-label="Snapping options"><Down /></Segment>
      </Segments>
      <Segments>
        <Segment aria-label="Move inside"><Flower /></Segment>
        <Segment $w={73} aria-label="Move outside"><Flower on /></Segment>
      </Segments>
      <Segments>
        <Segment aria-label="Insert behind">
          <Ico w={36} h={36}><path d="M13 11H35V35H13Z" fill="#3a9fe6" /><circle cx="14" cy="14" r="14.500" fill="#4b4b4b" /><circle cx="14" cy="14" r="13" fill="#f2f2f2" /></Ico>
        </Segment>
        <Segment $w={69} aria-label="Insert on top">
          <Ico w={36} h={36}><circle cx="13" cy="14" r="13" fill="#f2f2f2" /><path d="M11 10H35V34H11Z" fill="#3a9fe6" stroke="#4b4b4b" strokeWidth="2.500" /></Ico>
        </Segment>
        <Segment $w={73} aria-label="Insert inside">
          <Ico w={34} h={34}><circle cx="17" cy="17" r="16" fill="#f2f2f2" /><path d="M17 17H33C33 26 26 33 17 33Z" fill="#3a9fe6" stroke="#333" strokeWidth="1.500" /></Ico>
        </Segment>
      </Segments>
      <Segments>
        <Segment aria-label="Space horizontally"><Ico w={30} h={34}><path d="M2 6H9V28H2ZM21 8H27V22H21Z" fill={faint} /><path d="M12 0V34M17 0V34" stroke={grey} strokeWidth="2" /></Ico></Segment>
        <Segment $w={73} aria-label="Space vertically"><Ico w={32} h={32}><path d="M5 2H27V9H5ZM10 22H22V29H10Z" fill={faint} /><path d="M0 13H32M0 18H32" stroke={grey} strokeWidth="2" /></Ico></Segment>
      </Segments>
      <Segments>
        {alignIcons.map((icon, i) => <Segment key={i} $w={i === 0 || i === 5 ? 73 : 69} aria-label={`Align ${i + 1}`}>{icon}</Segment>)}
      </Segments>
      <Segments>
        <Segment $w={78} aria-label="Alignment"><Ico w={28} h={28}><path d="M0 0V28" stroke="#555" strokeWidth="2" /><path d="M3 3H28V12H3ZM3 16H20V25H3Z" fill="#666" /></Ico></Segment>
      </Segments>
      <Segments>
        <Segment aria-label="Flip horizontal"><Ico w={36} h={32}><path d="M0 32L15 0V32Z" fill={grey} /><path d="M20 2V31H34Z" stroke={faint} /></Ico></Segment>
        <Segment $w={68} aria-label="Flip vertical"><Ico w={32} h={34}><path d="M0 15L30 0V15Z" fill={grey} /><path d="M2 20H30V33Z" stroke={faint} /></Ico></Segment>
        <Segment $w={69} aria-label="Rotate left"><Ico w={30} h={32}><path d="M0 0H14V32H0Z" fill={grey} /><path d="M15 18V32" stroke="#222" strokeWidth="2" /><path d="M27 14V8H19M22 4L18 8L22 12" stroke="#6c6c6c" strokeWidth="2" /></Ico></Segment>
        <Segment $w={72} aria-label="Rotate right"><Ico w={30} h={32}><path d="M0 0H14V32H0Z" fill={grey} /><path d="M15 0V14" stroke="#222" strokeWidth="2" /><path d="M27 17V25H19M22 21L18 25L22 29" stroke="#6c6c6c" strokeWidth="2" /></Ico></Segment>
      </Segments>
      <Push />
      <button aria-label="More tools"><Ico w={18} h={18}><path d="M1 1L8 9L1 17M9 1L16 9L9 17" stroke="#e6e6e6" strokeWidth="2.200" /></Ico></button>
    </Toolbar>
    <ContextBar>
      <ContextLabel>No Selection</ContextLabel>
      <ContextButton>Document Setup…</ContextButton>
      <ContextButton>Spread Setup…</ContextButton>
      <ContextButton>Preferences…</ContextButton>
    </ContextBar>
  </>
);

const ToolStrip = () => (
  <Tools>
    <ToolGrid>
      <Tool aria-label="Move"><Ico w={20} h={26}><path d="M2 1L19 16L10 17L2 25Z" fill="#fff" stroke="#111" strokeWidth="1.500" /></Ico></Tool>
      <Tool $on aria-label="Node"><Ico w={20} h={30}><path d="M2 1L18 18L12 19L15 27L11 29L7 20L2 24Z" fill="#1c1c1c" stroke="#ddd" strokeWidth="2" /></Ico></Tool>
      <Tool aria-label="Artistic text"><Ico w={28} h={28}><GlyphText $serif x="0" y="27" fontSize="38">A</GlyphText></Ico></Tool>
      <Tool aria-label="Frame text"><Ico w={36} h={36}><rect x="1" y="1" width="34" height="34" fill="#ccc" stroke="#ddd" strokeWidth="2" /><rect x="3" y="3" width="30" height="30" stroke="#444" strokeWidth="2" /><text x="7" y="29" fontSize="33" fontWeight="700" fontFamily="Liberation Serif" fill="#000">T</text></Ico></Tool>
      <Tool aria-label="Pen">
        <Ico w={34} h={34}>
          <path d="M0 34L4 15C8 9 15 7 19 8L25 15C24 22 18 28 12 29Z" fill="#f4c479" stroke="#6b4a1f" strokeWidth="1.200" />
          <path d="M1 33L14 19" stroke="#222" strokeWidth="1.500" /><circle cx="15" cy="18" r="2.500" fill="#222" />
          <path d="M19 8L23 3L31 10L25 15Z" fill="#ddd" stroke="#333" strokeWidth="1.500" /><path d="M24 4L30 0L34 5L30 10Z" fill="#7d241c" />
        </Ico>
      </Tool>
    </ToolGrid>
    <ToolRule />
    <ToolGrid>
      <Tool aria-label="Rectangle"><Ico w={28} h={28}><rect width="28" height="28" fill="url(#sky)" /></Ico></Tool>
      <Tool aria-label="Ellipse"><Ico w={28} h={28}><circle cx="14" cy="14" r="14" fill="url(#sky)" /></Ico></Tool>
      <Tool aria-label="Triangle"><Ico w={28} h={28}><path d="M14 0L28 28H0Z" fill="url(#sky)" /><path d="M40 26V37H29Z" fill="#777" /></Ico></Tool>
      <Tool aria-label="Picture ellipse"><Cross round /></Tool>
      <Tool aria-label="Picture rectangle"><Cross /></Tool>
      <Tool aria-label="Place image">
        <Ico w={36} h={28}>
          <rect x="1" y="1" width="34" height="26" fill="#4aa5df" stroke="#ccc" strokeWidth="2.400" />
          <circle cx="27" cy="7" r="4" fill="#e9b64a" /><path d="M5 10L12 5L19 10Z" fill="#fff" />
          <path d="M2 13Q12 20 20 16T34 14V26H2Z" fill="#16294d" /><path d="M18 18L30 16L24 20L12 22Z" fill="#4aa5df" />
        </Ico>
      </Tool>
      <Tool aria-label="Crop"><Ico w={32} h={32}><path d="M0 7H25V32M7 0V26H32" stroke="#a9a9a9" strokeWidth="3.500" /><path d="M0 32L32 0" stroke="#a9a9a9" strokeWidth="2" /></Ico></Tool>
    </ToolGrid>
    <ToolRule />
    <ToolGrid>
      <Tool aria-label="Data merge"><Ico w={36} h={32}><path d="M1 1H11V13H1ZM1 5H11M1 9H11M0 23H12M0 27H12M0 31H8" stroke="#4a9ad4" strokeWidth="2" /><path d="M16 6H36V28H16L24 17Z" fill="#aaa" /><path d="M18 8H35M24 16H35M18 26H35" stroke="#555" /></Ico></Tool>
      <Tool aria-label="Table">
        <Ico w={32} h={32}><rect width="32" height="32" fill="#ddd" />
          {[0, 1, 2, 3, 4].map((r) => [0, 1, 2].map((k) => <rect key={`${r}${k}`} x={2 + k * 10} y={2 + r * 6} width="8" height="4" fill={r && k ? "#000" : "#666"} />))}
        </Ico>
      </Tool>
      <Tool aria-label="View">
        <Ico w={34} h={36}><path d="M1 19C4 17 7 20 9 23L5 6C5 3 9 3 10 6L13 16L14 2C14 -1 18 -1 18 2L19 15L23 4C24 1 28 2 27 6L24 18L29 13C31 10 35 13 33 16L27 28C24 36 13 38 10 31C8 26 4 23 1 19Z" fill="#e9a37c" stroke="#8d4d30" /></Ico>
      </Tool>
      <Tool aria-label="Zoom"><Ico w={32} h={34}><path d="M22 23L30 32" stroke="#c47436" strokeWidth="5" /><circle cx="13" cy="13" r="12" fill="#7cbcf0" stroke="#f0f0f0" strokeWidth="3" /><path d="M5 15C10 8 16 8 21 10" stroke="#cfe8ff" strokeWidth="3" /></Ico></Tool>
      <Tool aria-label="Transparency"><Ico w={18} h={36}><path d="M2 1H16C19 12 16 20 11 21V32L16 35H2L7 32V21C2 20 -1 12 2 1Z" fill="#b5bcd6" /><path d="M4 3H14V10H4Z" fill="#eef1fb" /></Ico></Tool>
      <Tool aria-label="Colour picker wheel">
        <Ico w={34} h={34}>
          {["#f33", "#f4c71c", "#8ddc2a", "#19c8a0", "#1c7cf0", "#5434e8", "#b23df0", "#f03ca0"].map((col, i) => (
            <path key={i} d="M16 18L16 2A16 16 0 0 1 27.500 7Z" fill={col} transform={`rotate(${i * 45} 16 18)`} />
          ))}
          <circle cx="16" cy="18" r="6" fill="#333" /><path d="M16 18L32 2" stroke="#222" strokeWidth="6" /><path d="M16 18L32 2" stroke="#fff" strokeWidth="2" />
          <circle cx="16" cy="18" r="2.500" fill="#fff" /><circle cx="32" cy="2" r="2.500" fill="#fff" />
        </Ico>
      </Tool>
      <Tool aria-label="Colour picker"><Dropper /></Tool>
    </ToolGrid>
    <ToolRule />
    <ToolFill><FillStroke /></ToolFill>
  </Tools>
);

const LeftStudio = () => (
  <Studio $w={530}>
    <TabRow>
      <Grip /><Tab $on>Transform</Tab><Tab>Asset</Tab><TabRule /><Tab $wide>Hlk</Tab><TabRule /><Tab $wide>Anc</Tab><TabRule /><Tab $wide>Nvg</Tab>
    </TabRow>
    <TransformBody>
      <AnchorBox>
        <Ico w={76} h={78}>
          <path d="M5 6H71V72H5Z" fill="#6d6d6d" />
          {[0, 33, 66].map((x) => [0, 34, 68].map((y) => <rect key={`${x}-${y}`} x={x} y={y} width="10" height="10" fill="#585858" />))}
        </Ico>
      </AnchorBox>
      <TransformGrid>
        <Label $right htmlFor="tx">X:</Label><TextField id="tx" $h={38} $dim defaultValue="0 mm" />
        <Label $right htmlFor="tw">W:</Label><TextField id="tw" $h={38} $dim defaultValue="0 mm" />
        <Label $right htmlFor="ty">Y:</Label><TextField id="ty" $h={38} $dim defaultValue="0 mm" />
        <Label $right htmlFor="th">H:</Label><TextField id="th" $h={38} $dim defaultValue="0 mm" />
        <Label $right htmlFor="tr">R:</Label><Pick id="tr" label="Rotation" value="0 °" h={38} dim />
        <Label $right htmlFor="ts">S:</Label><Pick id="ts" label="Shear" value="0 °" h={38} dim />
      </TransformGrid>
      <LinkBox><Ico w={10} h={28}><rect x="1.500" y="1" width="6" height="10" rx="3" stroke="#8a8a8a" strokeWidth="2" /><rect x="1.500" y="17" width="6" height="10" rx="3" stroke="#8a8a8a" strokeWidth="2" /><path d="M4.500 8V20" stroke="#8a8a8a" strokeWidth="2" /></Ico></LinkBox>
    </TransformBody>
    <TabRow $gap>
      <Grip /><Tab $on>Pages</Tab><Tab>Pinning</Tab><PanelMenu aria-label="Pages panel menu"><MenuLines /></PanelMenu>
    </TabRow>
    <StudioEdge />
    <Section $h={248}>
      <SectionHead>
        <Down s={20} color="#9a9a9a" /><SectionTitle>Master Pages</SectionTitle>
        <SectionTools>
          <button aria-label="Add master"><DocIcon lines /></button>
          <button aria-label="Duplicate master"><DocCopy lines /></button>
          <button aria-label="Delete master"><Trash /></button>
        </SectionTools>
      </SectionHead>
    </Section>
    <Section>
      <SectionHead>
        <Down s={20} color="#9a9a9a" /><SectionTitle>Pages</SectionTitle>
        <SectionTools>
          <Ico w={47} h={22}><path d="M0 2H28M0 7H4M0 12H4M0 17H4M16 7H28M16 12H28M16 17H28" stroke="#ddd" strokeWidth="1.800" /><path d="M6 2H14V22L10 18L6 22Z" fill="#ddd" /></Ico>
          <button aria-label="Add page"><DocIcon /></button>
          <button aria-label="Duplicate page"><DocCopy /></button>
          <button aria-label="Delete page"><Trash /></button>
        </SectionTools>
      </SectionHead>
      <PageTile><PageThumb /><figcaption>Page 1</figcaption></PageTile>
    </Section>
    <TabRow>
      <Grip /><Tab>Find and Replace</Tab><Gap $w={8} /><Tab $on>History</Tab>
    </TabRow>
    <Body>
      <Body $pad="6px 22px 0 17px">
        <Row $h={52} $gap={18}><Label $small htmlFor="pos">Position:</Label><HistorySlider id="pos" type="range" defaultValue={100} /></Row>
      </Body>
      <HistoryItem>Delete master pages</HistoryItem>
    </Body>
    <Body $tone="#4b4b4b" $pad="0 0 301px" />
  </Studio>
);

const channels = [
  { name: "H", value: "0", pos: 0, knob: "#e32b16", track: "linear-gradient(90deg,#f30,#ff0 16%,#0f0 32%,#0ff 50%,#00f 67%,#f0f 83%,#f00)" },
  { name: "S", value: "0", pos: 0, knob: "#fff", track: "#fff" },
  { name: "L", value: "100", pos: 100, knob: "#fff", track: "linear-gradient(90deg,#000,#fff)" },
];

const RightStudio = () => (
  <Studio $w={528}>
    <TabRow>
      <Grip /><Tab $on>Layers</Tab><Gap $w={21} /><Tab $wide>TSt</Tab><Push /><Tab $wide>Flds</Tab><PanelMenu $far aria-label="Layers panel menu"><MenuLines /></PanelMenu>
    </TabRow>
    <Body $pad="0 18px 0 11px">
      <Row $h={58} $gap={5}>
        <Label $small $w={105} htmlFor="lop">Opacity:</Label>
        <Pick id="lop" label="Layer opacity" value="100 %" w={96} dim />
        <Pick label="Blend mode" value="Normal" w={217} flat dim />
        <button aria-label="Blend options">
          <Ico w={34} h={26}><circle cx="16" cy="13" r="7" stroke="#aaa" strokeWidth="5" /><circle cx="16" cy="13" r="11" stroke="#aaa" strokeWidth="4" strokeDasharray="5 3.640" /></Ico>
        </button>
        <Push /><button aria-label="Lock layer"><Lock /></button>
      </Row>
    </Body>
    <Body $tone={c.dark} $grow />
    <LayerFoot>
      <LayerStack aria-label="Layer states"><Ico w={32} h={26}><path d="M0 1H32V4L16 11L0 4Z" fill="#aaa" /><path d="M0 9L16 16L32 9M0 15L16 22L32 15" stroke="#aaa" strokeWidth="3" /></Ico></LayerStack>
      <button aria-label="Mask"><Ico w={28} h={24}><rect width="28" height="24" fill="#a8a8a8" /><circle cx="14" cy="12" r="8" fill="#444" /></Ico></button>
      <button aria-label="Adjustments"><Ico w={24} h={24}><circle cx="12" cy="12" r="10.500" stroke="#a8a8a8" strokeWidth="3" /><path d="M19 4A11 11 0 1 0 4 19Z" fill="#a8a8a8" /></Ico></button>
      <button aria-label="Effects"><Ico w={28} h={26}><text x="0" y="20" fontSize="32" fontStyle="italic" fontFamily="Liberation Serif" fill="#b4b4b4">fx</text></Ico></button>
      <Push />
      <Row $gap={26}>
        <button aria-label="Add layer"><Ico w={20} h={24}><path d="M1 1H11L19 9V23H1ZM11 1V9H19" stroke="#a8a8a8" strokeWidth="2.200" /></Ico></button>
        <button aria-label="Delete layer"><Trash color="#a8a8a8" /></button>
      </Row>
    </LayerFoot>
    <TabRow $gap>
      <Grip /><Tab $on>Swatches</Tab><Tab>Stroke</Tab><PanelMenu aria-label="Swatches panel menu"><MenuLines /></PanelMenu>
    </TabRow>
    <Body $pad="17px 16px 10px 15px">
      <FillRow>
        <FillStroke w={84} h={80} />
        <Row $gap={6} $left={2}><Dropper /><Dot $d={28} $c="#000" /></Row>
        <Push />
        <Row $gap={17} $top={17}><Label htmlFor="sop">Opacity:</Label><Pick id="sop" label="Swatch opacity" value="100 %" w={120} h={42} /></Row>
      </FillRow>
    </Body>
    <Body $tone={c.chrome} $pad="21px 16px 0 15px">
      <Row $h={28}><span>Recent:</span><Recent /></Row>
      <Row $top={16} $h={40}>
        <Frame $flat $w={280}>
          <Gap $w={16} />
          <Ico w={28} h={24}><path d="M14 2L26 22H2Z" stroke="#000" strokeWidth="6" strokeLinejoin="round" /></Ico>
          <Gap $w={5} />
          <Choice aria-label="Palette"><option>1 _ cmyk</option></Choice><UpDown />
        </Frame>
        <Gap $w={15} />
        <Ico w={28} h={28}><path d="M1 1H11V11H1ZM17 1H27V11H17ZM1 17H11V27H1Z" stroke="#b0b0b0" strokeWidth="2" /><path d="M4 4H8V8H4ZM20 4H24V8H20ZM4 20H8V24H4Z" fill="#b0b0b0" /><path d="M22 16V28M16 22H28" stroke="#b0b0b0" strokeWidth="4" /></Ico>
        <Push />
        <MiniSwatches>
          <Mini $c={slash} aria-label="None" /><Mini $c="#000" aria-label="Black" /><Mini $c="#808080" aria-label="Grey" /><Mini $c="#fff" aria-label="White" />
        </MiniSwatches>
      </Row>
      <SwatchArea>
        <SwatchGrid>
          {swatchColors.map((s, i) => <Swatch key={i} $c={s} aria-label={`Swatch ${i + 1}`} />)}
        </SwatchGrid>
        <SwatchScroll />
      </SwatchArea>
      <SearchBox>
        <Ico w={20} h={20}><circle cx="8" cy="8" r="6.500" stroke="#bbb" strokeWidth="1.800" /><path d="M13 13L19 19" stroke="#bbb" strokeWidth="1.800" /></Ico>
        <SearchInput aria-label="Search swatches" />
      </SearchBox>
    </Body>
    <TabRow>
      <Grip /><Tab $on>Colour</Tab><Tab>Styles</Tab><TabRule /><Tab>Constraints</Tab><PanelMenu aria-label="Colour panel menu"><MenuLines /></PanelMenu>
    </TabRow>
    <Body $pad="16px 16px 10px 15px">
      <FillRow>
        <FillStroke w={84} h={80} />
        <Row $gap={6} $left={2}><Dropper /><Dot $d={28} $c="#000" /></Row>
        <Push />
        <Row $gap={6} $top={11} $right={6}><LockButton aria-label="Lock colour"><Lock color="#c4c4c4" /></LockButton><Pick label="Colour mode" value="HSL" w={184} flat /></Row>
      </FillRow>
      <ChannelGrid>
        {channels.map((ch) => (
          <React.Fragment key={ch.name}>
            <Label htmlFor={`ch${ch.name}`}>{ch.name}</Label>
            <ChannelSlider><Slider type="range" id={`ch${ch.name}`} defaultValue={ch.pos} $track={ch.track} $knob={ch.knob} /></ChannelSlider>
            <TextField aria-label={`${ch.name} value`} defaultValue={ch.value} />
          </React.Fragment>
        ))}
      </ChannelGrid>
      <Ramp />
      <Row $top={5}><Label htmlFor="cop">Opacity</Label></Row>
      <Row $h={40} $gap={16}>
        <Dot $d={24} $c="#fff" />
        <Slider type="range" id="cop" defaultValue={100} $knob="#333"
          $track="linear-gradient(90deg,#fff,rgba(160,160,160,.3) 40%,#3a3a3a), repeating-conic-gradient(#777 0 25%,#aaa 0 50%) 0 0/16px 16px" />
        <Combo label="Colour opacity" value="100 %" w={120} />
      </Row>
    </Body>
  </Studio>
);

const L = 0, R = 26;
const alignSets: { rows: [number, number][]; bar?: boolean }[] = [
  { rows: [[L, 24], [L, 16], [L, 26], [L, 14], [L, 26], [L, 17]] },
  { rows: [[L, R], [5, 21], [L, R], [6, 20], [L, R], [5, 21]] },
  { rows: [[L, R], [9, R], [L, R], [12, R], [L, R], [9, R]] },
  { rows: [[L, R], [L, R], [L, R], [L, R], [L, R], [L, 17]] },
  { rows: [[L, R], [L, R], [L, R], [L, R], [L, R], [6, 20]] },
  { rows: [[L, R], [L, R], [L, R], [L, R], [L, R], [9, R]] },
  { rows: [[L, R], [L, R], [L, R], [L, R], [L, R], [L, R]] },
  { rows: [[L, 20], [6, 20], [L, 20], [8, 20], [L, 20], [5, 20]], bar: true },
  { rows: [[L, 19], [L, 13], [L, 19], [L, 12], [L, 19], [L, 14]], bar: true },
];

const hl = (x1: number, x2: number, ys: number[]) => ys.map((y) => `M${x1} ${y}H${x2}`).join("");
const spacingIcons: React.ReactNode[] = [
  <Ico w={27} h={26}><path d={hl(14, 27, [1, 5, 9, 13, 17, 21, 25])} stroke="#eee" strokeWidth="2" /><path d="M0 13H10M7 10L10 13L7 16" stroke="#eee" strokeWidth="1.600" /></Ico>,
  <Ico w={27} h={26}><path d={hl(0, 12, [1, 5, 9, 13, 17, 21, 25])} stroke="#eee" strokeWidth="2" /><path d="M16 13H27M19 10L16 13L19 16" stroke="#eee" strokeWidth="1.600" /></Ico>,
  <Ico w={26} h={26}><path d={hl(0, 26, [15, 20, 25])} stroke="#eee" strokeWidth="2" /><path d="M13 0V10M10 8L13 11L16 8" stroke="#eee" strokeWidth="1.600" /></Ico>,
  <Ico w={26} h={26}><path d={hl(12, 26, [1]) + hl(0, 26, [5, 9, 13, 17, 21, 25])} stroke="#eee" strokeWidth="2" /></Ico>,
  <Ico w={26} h={24}><path d={hl(0, 17, [1, 6, 10, 14, 18]) + hl(0, 26, [22])} stroke="#eee" strokeWidth="2" /></Ico>,
  <Ico w={26} h={26}><path d={hl(13, 26, [1]) + hl(0, 26, [5, 10])} stroke="#eee" strokeWidth="2" /><path d="M13 14V24M10 21L13 24L16 21" stroke="#eee" strokeWidth="1.600" /></Ico>,
];
const tick = "M11 19L14 22L19 16";
const justifyIcon = (big: boolean, kind: number) => (
  <Ico w={28} h={24}>
    {big ? <GlyphText x="0" y="13" fontSize="19">AZ</GlyphText> : <GlyphText x="0" y="10" fontSize="11">Az Az</GlyphText>}
    {kind === 0 && <HArrow a={8} b={19} y={20} />}
    {kind === 1 && <path d={tick} stroke="#eee" strokeWidth="2" />}
    {kind === 2 && <HArrow a={1} b={27} y={20} />}
  </Ico>
);

const CharacterPanels = () => (
  <SidePanels>
    <TabRow>
      <CloseButton aria-label="Close Character"><CloseX /></CloseButton>
      <Grip $w={38} /><Tab $on>Character</Tab><PanelMenu aria-label="Character panel menu"><MenuLines /></PanelMenu>
    </TabRow>
    <Body $pad="19px 14px 17px 18px">
      <Row $gap={4}><Pick label="Font collection" value="All Fonts" w={162} flat /><Combo label="Font family" value="Arial" /></Row>
      <Row $gap={4} $top={6}>
        <Combo label="Font size" value="12 pt" w={162} />
        <Pick label="Font style" value="Regular" w={232} flat />
        <Row $gap={6} $left={1}><ColorBlock $c="#000" aria-label="Text fill" /><ColorBlock $c={slash} aria-label="Text background" /></Row>
      </Row>
      <Row $top={6}><Combo label="Character style" value="[No Style]" /></Row>
    </Body>
    <FoldHead title="Decorations" />
    <FoldHead title="Positioning and Transform" open />
    <Body $pad="11px 14px 14px 32px">
      <PositionGrid>
        <IconCell><Ico w={30} h={30}><GlyphText x="-1" y="20" fontSize="20">V</GlyphText><GlyphText x="15" y="20" fontSize="20">A</GlyphText><path d="M10 27L19 3" stroke="#dedede" strokeWidth="1.600" /><HArrow a={15} b={29} y={25} /></Ico></IconCell>
        <Combo label="Kerning" value="(0 ‰)" /><Steps label="kerning" />
        <IconCell $end><Ico w={20} h={22}><GlyphText $serif x="0" y="20" fontSize="28" fontStyle="italic">T</GlyphText></Ico></IconCell>
        <TextField aria-label="Shear" defaultValue="0 °" /><Steps label="shear" />

        <IconCell><Ico w={30} h={28}><GlyphText x="1" y="17" fontSize="20">VA</GlyphText><HArrow a={1} b={28} y={24} /></Ico></IconCell>
        <Combo label="Tracking" value="0 ‰" /><Steps label="tracking" />
        <IconCell $end><Ico w={20} h={28}><GlyphText $serif x="2" y="19" fontSize="27">T</GlyphText><HArrow a={1} b={19} y={25} /></Ico></IconCell>
        <TextField aria-label="Horizontal scale" defaultValue="100 %" /><Steps label="horizontal scale" />

        <IconCell><Ico w={30} h={28}><GlyphText x="11" y="16" fontSize="19">A</GlyphText><path d="M8 17H28" stroke="#dedede" strokeWidth="1.600" /><VArrow x={4} a={15} b={27} /></Ico></IconCell>
        <Combo label="Baseline" value="0 pt" /><Steps label="baseline" />
        <IconCell $end><Ico w={24} h={22}><VArrow x={4} a={2} b={21} /><GlyphText $serif x="8" y="20" fontSize="27">T</GlyphText></Ico></IconCell>
        <TextField aria-label="Vertical scale" defaultValue="100 %" /><Steps label="vertical scale" />

        <IconCell><Ico w={30} h={30}><GlyphText x="11" y="13" fontSize="16">A</GlyphText><GlyphText x="11" y="28" fontSize="16">A</GlyphText><path d="M8 14H28M8 29H28" stroke="#dedede" strokeWidth="1.600" /><VArrow x={4} a={14} b={28} /></Ico></IconCell>
        <Combo label="Leading override" value="(12,4 pt)" /><Steps label="leading override" />
        <IconCell $end><Ico w={20} h={22}><GlyphText x="-1" y="19" fontSize="23">S</GlyphText><path d="M15 3H20V8H15ZM15 14H20V19H15Z" fill="#dedede" /></Ico></IconCell>
        <Span2><Pick label="Script" value="None" flat /></Span2>
      </PositionGrid>
      <Row $top={19} $left={34}><CheckLabel><Check type="checkbox" />No break</CheckLabel></Row>
    </Body>
    <FoldHead title="Typography" />
    <FoldHead title="Language" />
    <FoldHead title="Optical Alignment" />
    <Gap $w={98} />
    <TabRow>
      <CloseButton aria-label="Close Paragraph"><CloseX /></CloseButton>
      <Grip $w={38} /><Tab $on>Paragraph</Tab>
    </TabRow>
    <Body $pad="25px 10px 37px 20px">
      <AlignBar>{alignSets.map((a, i) => <AlignButton key={i} $on={i === 0} aria-label={`Alignment ${i + 1}`}><Lines rows={a.rows} bar={a.bar} /></AlignButton>)}</AlignBar>
      <Row $top={13} $left={2}><Combo label="Paragraph style" value="[No Style]" w={400} /></Row>
    </Body>
    <FoldHead title="Spacing" open />
    <Body $pad="6px 14px 10px 16px">
      <Row><RightLabel htmlFor="lead">Leading:</RightLabel><Combo id="lead" label="Leading" value="[12,4 pt]" w={224} /></Row>
      <SpacingGrid>
        {["0 mm", "0 mm", "0 pt", "0 mm", "0 mm", "0 pt"].map((v, i) => (
          <React.Fragment key={i}>
            <IconCell $mid={i % 3 > 0}>{spacingIcons[i]}</IconCell>
            <TextField aria-label={`Spacing ${i + 1}`} defaultValue={v} />
            <Steps label={`spacing ${i + 1}`} />
          </React.Fragment>
        ))}
      </SpacingGrid>
      <Row $top={13} $h={40}>
        <CheckLabel $small><Check type="checkbox" />Space between same styles:</CheckLabel>
        <Push /><Row $gap={4} $right={28}><TextField $w={86} $dim aria-label="Same style spacing" defaultValue="0 pt" /><Steps dim label="same style spacing" /></Row>
      </Row>
      <Row $h={32}><CheckLabel $small><Check type="checkbox" />Sum space before and after</CheckLabel></Row>
      <Row $left={2}><RightLabel $small htmlFor="usb">Use space before:</RightLabel><Pick id="usb" label="Use space before" value="Only between…" w={228} h={48} flat small /></Row>
    </Body>
    <FoldHead title="Tab Stops" />
    <FoldHead title="Justification" open />
    <Body $pad="12px 14px 24px 16px">
      <JustifyGrid>
        {["80 %", "100 %", "133 %", "0 %", "0 %", "0 %"].map((v, i) => (
          <React.Fragment key={i}>
            <IconCell $mid={i % 3 > 0}>{justifyIcon(i > 2, i % 3)}</IconCell>
            <Pick label={`Justification ${i + 1}`} value={v} />
          </React.Fragment>
        ))}
      </JustifyGrid>
    </Body>
    <FoldHead title="Flow Options" />
    <FoldHead title="Bullets and Numbering" />
    <FoldHead title="Baseline Grid" />
    <FoldHead title="Hyphenation" />
    <FoldHead title="Drop Caps" />
  </SidePanels>
);

export default function App() {
  return (
    <Screen>
      <Global />
      <SharedDefs width="0" height="0" aria-hidden="true">
        <defs><linearGradient id="sky" x2="0" y2="1"><stop stopColor="#3da0e0" /><stop offset="1" stopColor="#0a7cc8" /></linearGradient></defs>
      </SharedDefs>
      <MenuBar>
        <MenuGroup>
          <Ico w={28} h={32}>
            <path d="M20 0C20 4 17 7 14 7C14 3 17 0 20 0ZM14 10C16 10 18 8 21 8C23 8 25 9 26 11C21 14 22 21 27 23C25 28 23 31 20 31C18 31 17 30 14 30C12 30 11 31 9 31C4 31 -2 18 4 11C7 7 11 9 14 10Z" fill="#e4e4e4" />
          </Ico>
          <MenuItem $strong>Affinity Publisher</MenuItem>
          {["File", "Edit", "Document", "Text", "Table", "Layer", "Select", "View", "Window", "Help"].map((m) => <MenuItem key={m}>{m}</MenuItem>)}
        </MenuGroup>
        <Extras>
          <Ico w={27} h={20}><circle cx="4" cy="4.500" r="3.200" stroke="#e4e4e4" strokeWidth="2" /><circle cx="4" cy="15.500" r="3.200" stroke="#e4e4e4" strokeWidth="2" /><path d="M7 6L25 17L13 12M7 14L25 3L13 9" stroke="#e4e4e4" strokeWidth="2" /></Ico>
          <Sensor>39°C<br />3505rpm</Sensor>
          <Ico w={38} h={32}><path d="M8 6L14 0L18 4L12 10ZM1 14C1 10 5 9 7 11L10 14L15 8L22 16L10 29L1 18ZM2 27L6 24L8 29L4 32Z" fill="#e4e4e4" /></Ico>
          <Ico w={42} h={32}><path d="M8 17A15 15 0 1 1 14 29" stroke="#e4e4e4" strokeWidth="2.400" /><path d="M1 15H13L7 23Z" fill="#e4e4e4" /><path d="M23 7V17L28 22" stroke="#e4e4e4" strokeWidth="2.200" /></Ico>
          <Flag />
          <BatteryText>100 %</BatteryText>
          <Ico w={46} h={26}><rect x="1.500" y="2" width="39" height="22" rx="4" stroke="#e4e4e4" strokeWidth="2.400" /><rect x="5" y="5" width="32" height="16" rx="2" fill="#e4e4e4" /><path d="M25 -1L13 14H21L17 27L30 11H22Z" fill="#e4e4e4" stroke="#272727" strokeWidth="2" /><path d="M43 9C46 10 46 16 43 17Z" fill="#e4e4e4" /></Ico>
          <Ico w={42} h={28}><path d="M1 9C12 -2 30 -2 41 9L21 27Z" stroke="#e4e4e4" strokeWidth="2" /></Ico>
          <Clock><span>Do. 11.Mai</span><span>12:38:10</span></Clock>
          <Ico w={36} h={30}><circle cx="11" cy="11" r="9.500" stroke="#e4e4e4" strokeWidth="2.400" /><path d="M18 18L28 28" stroke="#e4e4e4" strokeWidth="2.800" /></Ico>
          <Ico w={36} h={22}><path d="M9 2H36M9 11H32M9 20H36M0 2H5M0 11H5M0 20H5" stroke="#e4e4e4" strokeWidth="3.200" /></Ico>
        </Extras>
      </MenuBar>
      <Desk>
        <MainWindow>
          <Toolbars />
          <Workspace>
            <ToolStrip />
            <LeftStudio />
            <CanvasColumn>
              <Canvas><Sheet /></Canvas>
              <CanvasFoot />
            </CanvasColumn>
            <RightStudio />
          </Workspace>
          <StatusBar>
            <Ico w={60} h={22}><path d="M1 1V21" stroke="#888" strokeWidth="2" /><path d="M20 1V21L4 11ZM55 1V21L39 11Z" fill="#777" /></Ico>
            <PageCount>1 of 1</PageCount>
            <Ico w={56} h={22}><path d="M0 0V20L16 10Z" fill="#eee" /><path d="M34 1V20L49 11Z" fill="#777" /><path d="M53 1V21" stroke="#777" strokeWidth="2" /></Ico>
            <Gap $w={15} />
            <Ico w={22} h={26}><path d="M2 2H20V24H2Z" stroke="#999" strokeWidth="2" /><path d="M6 7H16" stroke="#999" strokeWidth="4" /><path d="M6 12H16M6 16H16M6 20H16" stroke="#999" strokeWidth="1.600" /></Ico>
            <Gap $w={31} />
            <Ico w={24} h={22}><path d="M4 19V8C4 -2 20 -2 20 8V19Z" fill="#1f9e5c" /><path d="M8 18V8C8 4 10 2 12 2V18Z" fill="#6fdca0" /><path d="M0 20H24" stroke="#888" strokeWidth="3" /></Ico>
            <Hint><b>Drag</b> to marquee select. <b>Click</b> an object to select it.</Hint>
          </StatusBar>
          <Outline stroke="#fcf81c" strokeWidth="6" fill="none" aria-hidden="true">
            <line x1="19" y1="0" x2="99.5%" y2="0" strokeDasharray="18 16" />
            <line x1="100%" y1="15" x2="100%" y2="99%" strokeDasharray="18 16" />
            <line x1="23" y1="100%" x2="99.3%" y2="100%" strokeDasharray="18 16" />
            <line x1="0" y1="5" x2="0" y2="99%" strokeDasharray="18 16" />
          </Outline>
          <Bubble $x="calc(100% - 317px)" $y={10} $top={106}>
            <BubbleShape width="240" height="224" viewBox="0 0 240 224">
              <path d="M144 75L233 2L186 94Z" fill="#ffff00" />
              <ellipse cx="109" cy="145" rx="109" ry="76" fill="#ffff00" />
            </BubbleShape>
            Main<br />Window
          </Bubble>
        </MainWindow>
        <SideWrap>
          <CharacterPanels />
          <Bubble $x="164px" $y={123} $top={39}>
            <BubbleShape width="240" height="224" viewBox="0 0 240 224">
              <path d="M86 140L112 199L134 140Z" fill="#ffc400" />
              <ellipse cx="109" cy="78" rx="109" ry="76" fill="#ffc400" />
            </BubbleShape>
            separate<br />panels
          </Bubble>
        </SideWrap>
      </Desk>
    </Screen>
  );
}
